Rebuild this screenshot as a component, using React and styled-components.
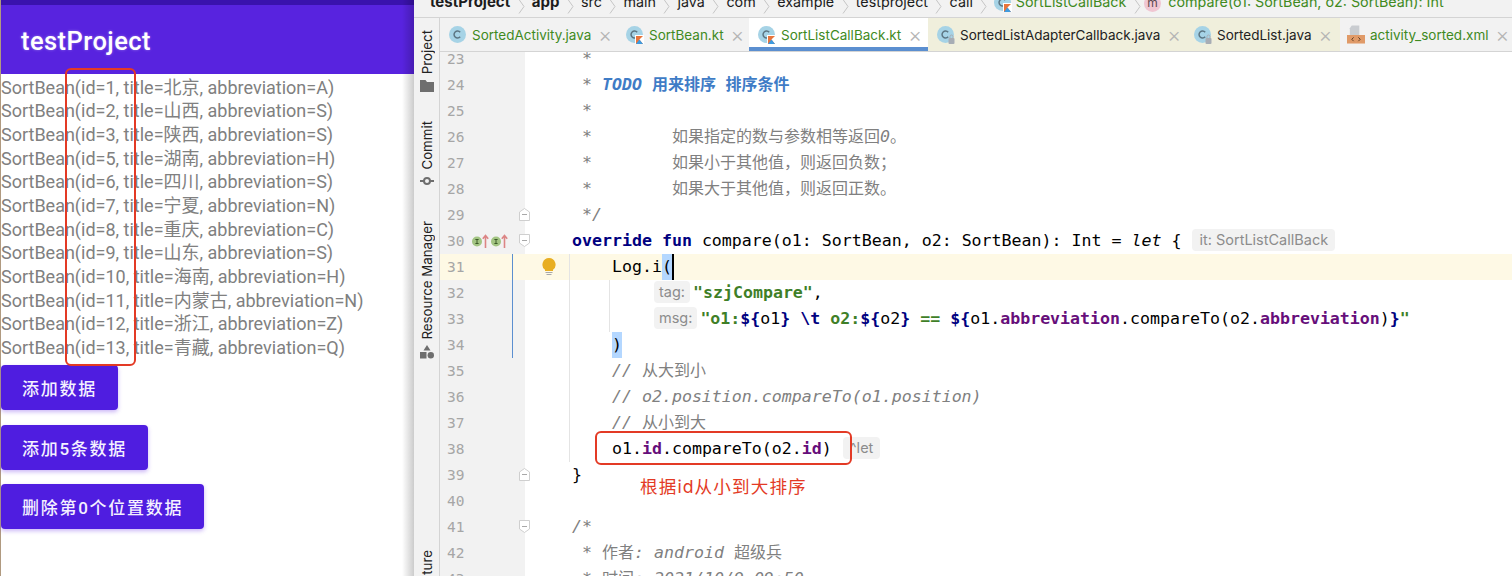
import React from "react";
import styled, { createGlobalStyle } from "styled-components";

const SANS = `"Inter", "Noto Sans CJK SC", sans-serif`;
const MONO = `"DejaVu Sans Mono", "Noto Sans CJK SC", monospace`;

const beans = [
  ["1", "北京", "A"],
  ["2", "山西", "S"],
  ["3", "陕西", "S"],
  ["5", "湖南", "H"],
  ["6", "四川", "S"],
  ["7", "宁夏", "N"],
  ["8", "重庆", "C"],
  ["9", "山东", "S"],
  ["10", "海南", "H"],
  ["11", "内蒙古", "N"],
  ["12", "浙江", "Z"],
  ["13", "青藏", "Q"],
];

const crumbs = ["src", "main", "java", "com", "example", "testproject", "call"];

const ClassIcon = ({ kotlin, lock }) => (
  <svg width="18" height="18" viewBox="0 0 18 18" style={{ flex: "none" }}>
    <circle cx="8.5" cy="8.5" r="8.5" fill="#a6d3e6" />
    <path d="M11.2 6.2A3.5 3.5 0 1 0 11.2 10.8" fill="none" stroke="#5d7683" strokeWidth="1.5" />
    {kotlin && <rect x="9" y="9" width="9" height="9" fill="#fff" />}
    {kotlin && <path d="M10 10h7l-3.6 3.6L17 18h-7z" fill="#e8743b" />}
    {kotlin && <path d="M13.4 13.6L17 18h-7z" fill="#3d9be0" />}
    {lock && <rect x="11.5" y="12" width="6" height="6" rx="1" fill="#a7adb5" />}
    {lock && <path d="M13 12v-1.5a1.5 1.5 0 0 1 3 0V12" fill="none" stroke="#a7adb5" />}
  </svg>
);

const XmlIcon = () => (
  <svg width="18" height="20" viewBox="0 0 19 20" style={{ flex: "none", marginLeft: -2 }}>
    <path d="M5 0h8v10H3V3z" fill="#c9ccd0" />
    <rect x="0" y="10" width="19" height="9" fill="#e09a68" />
    <path d="M7 12.5L5 14.5l2 2M12 12.5l2 2-2 2" fill="none" stroke="#5a3a22" strokeWidth="1" />
  </svg>
);

const FoldMark = ({ up }) => (
  <svg width="11" height="13" viewBox="0 0 11 13">
    <path
      d={up ? "M.5 12.5V4L5.5.5 10.5 4v8.5z" : "M.5.5h10V9L5.5 12.5.5 9z"}
      fill="#fff"
      stroke="#cfcfcf"
    />
    <path d="M3 6.5h5" stroke="#a8a8a8" />
  </svg>
);

const OverrideMark = () => (
  <svg width="18" height="16" viewBox="0 0 18 16">
    <circle cx="5" cy="8.5" r="5" fill="#a3c583" />
    <path d="M3.4 6.5h3.2M3.4 10.5h3.2M5 6.5v4" stroke="#3c5a28" strokeWidth="1" />
    <path d="M13.5 15V3M10.8 5.8l2.7-3.3 2.7 3.3" fill="none" stroke="#dc8585" strokeWidth="1.6" />
  </svg>
);

const Bulb = () => (
  <svg width="14" height="18" viewBox="0 0 14 18">
    <path d="M7 0a6.6 6.6 0 0 0-4 11.8V13h8v-1.2A6.6 6.6 0 0 0 7 0z" fill="#e8ae22" />
    <path d="M3.5 14.5h7M4.5 16.5h5" stroke="#a9a9a9" strokeWidth="1.2" />
  </svg>
);

const FolderIcon = () => (
  <svg width="14" height="12" viewBox="0 0 14 12">
    <path d="M0 0h5.5l1.5 2h7v10H0z" fill="#6e6e6e" />
  </svg>
);

const CommitIcon = () => (
  <svg width="14" height="10" viewBox="0 0 14 10">
    <circle cx="7" cy="5" r="3" fill="none" stroke="#6e6e6e" strokeWidth="2" />
    <path d="M0 5h4M10 5h4" stroke="#6e6e6e" strokeWidth="2" />
  </svg>
);

const ShapesIcon = () => (
  <svg width="14" height="14" viewBox="0 0 14 14">
    <path d="M7 0l3.5 5.5h-7z" fill="#6e6e6e" />
    <rect x="0" y="7" width="6.5" height="6.5" fill="#6e6e6e" />
    <circle cx="10.8" cy="10.3" r="3.2" fill="#6e6e6e" />
  </svg>
);

const Chevron = () => (
  <svg width="7" height="15" viewBox="0 0 7 15" style={{ flex: "none", marginBottom: -2 }}>
    <path d="M1 .5l5 7-5 7" fill="none" stroke="#c6c6c6" />
  </svg>
);

const App = () => {
  return (
    <Page>
      <GlobalStyle />
      <Phone>
        <StatusBar />
        <AppBar>testProject</AppBar>
        <BeanList>
          {beans.map(([id, title, abbr]) => (
            <BeanRow key={id}>
              SortBean(id={id}, title={title}, abbreviation={abbr})
            </BeanRow>
          ))}
        </BeanList>
        <Buttons>
          <ActionButton>添加数据</ActionButton>
          <ActionButton>添加5条数据</ActionButton>
          <ActionButton>删除第0个位置数据</ActionButton>
        </Buttons>
        <IdColumnMark />
        <EdgeShadow />
      </Phone>

      <Ide>
        <Breadcrumb>
          <Crumb $bold>testProject</Crumb>
          <Chevron />
          <Crumb $bold>app</Crumb>
          <Chevron />
          {crumbs.map((c) => (
            <React.Fragment key={c}>
              <Crumb>{c}</Crumb>
              <Chevron />
            </React.Fragment>
          ))}
          <ClassIcon kotlin />
          <Crumb $green $tight>SortListCallBack</Crumb>
          <Chevron />
          <MethodIcon>m</MethodIcon>
          <Crumb $green>compare(o1: SortBean, o2: SortBean): Int</Crumb>
        </Breadcrumb>

        <Workspace>
          <ToolStrip>
            <ToolItem $top={12}>
              <ToolLabel>Project</ToolLabel>
              <FolderIcon />
            </ToolItem>
            <ToolItem $top={29}>
              <ToolLabel>Commit</ToolLabel>
              <CommitIcon />
            </ToolItem>
            <ToolItem $top={35}>
              <ToolLabel>Resource Manager</ToolLabel>
              <ShapesIcon />
            </ToolItem>
            <ToolItem $top={191}>
              <ToolLabel>ture</ToolLabel>
            </ToolItem>
          </ToolStrip>

          <EditorColumn>
            <TabBar>
              <Tab $width={177}>
                <ClassIcon />
                <TabName>SortedActivity.java</TabName>
                <TabClose>×</TabClose>
              </Tab>
              <Tab $width={132}>
                <ClassIcon kotlin />
                <TabName>SortBean.kt</TabName>
                <TabClose>×</TabClose>
              </Tab>
              <Tab $width={179} $active>
                <ClassIcon kotlin />
                <TabName>SortListCallBack.kt</TabName>
                <TabClose>×</TabClose>
              </Tab>
              <Tab $width={257} $library>
                <ClassIcon lock />
                <TabName $dark>SortedListAdapterCallback.java</TabName>
                <TabClose>×</TabClose>
              </Tab>
              <Tab $width={155} $library>
                <ClassIcon lock />
                <TabName $dark>SortedList.java</TabName>
                <TabClose>×</TabClose>
              </Tab>
              <Tab $width={180}>
                <XmlIcon />
                <TabName>activity_sorted.xml</TabName>
                <TabClose>×</TabClose>
              </Tab>
            </TabBar>

            <Editor>
              <Scroller>
                <Line n={23}><Cmt> *</Cmt></Line>
                <Line n={24}>
                  <Cmt> * </Cmt>
                  <Todo>TODO </Todo>
                  <TodoCjk>用来排序 排序条件</TodoCjk>
                </Line>
                <Line n={25}><Cmt> *</Cmt></Line>
                <Line n={26}>
                  <Cmt> *        </Cmt>
                  <CmtCjk>如果指定的数与参数相等返回</CmtCjk>
                  <Cmt>0</Cmt>
                  <CmtCjk>。</CmtCjk>
                </Line>
                <Line n={27}>
                  <Cmt> *        </Cmt>
                  <CmtCjk>如果小于其他值，则返回负数；</CmtCjk>
                </Line>
                <Line n={28}>
                  <Cmt> *        </Cmt>
                  <CmtCjk>如果大于其他值，则返回正数。</CmtCjk>
                </Line>
                <Line n={29} fold="up"><Cmt> */</Cmt></Line>
                <Line n={30} fold="down" marks>
                  <Kw>override fun</Kw> compare(o1: SortBean, o2: SortBean): Int = <em>let</em> {"{"}
                  <Inlay $after>it: SortListCallBack</Inlay>
                </Line>
                <Line n={31} current changed guide bulb>
                  {"    Log.i"}
                  <Paren>(</Paren>
                  <Caret />
                </Line>
                <Line n={32} changed guide inner>
                  {"        "}
                  <Inlay>tag:</Inlay>
                  <Str>"szjCompare"</Str>,
                </Line>
                <Line n={33} changed guide inner>
                  {"        "}
                  <Inlay>msg:</Inlay>
                  <Str>"o1:</Str><Kw>{"${"}</Kw>o1<Kw>{"}"} \t</Kw><Str> o2:</Str><Kw>{"${"}</Kw>o2<Kw>{"}"}</Kw>
                  <Str> == </Str><Kw>{"${"}</Kw>o1.<Prop>abbreviation</Prop>.compareTo(o2.<Prop>abbreviation</Prop>)<Kw>{"}"}</Kw><Str>"</Str>
                </Line>
                <Line n={34} changed guide>
                  {"    "}
                  <Paren>)</Paren>
                </Line>
                <Line n={35} guide>
                  <Cmt>{"    // "}</Cmt>
                  <CmtCjk>从大到小</CmtCjk>
                </Line>
                <Line n={36} guide>
                  <Cmt>{"    // o2.position.compareTo(o1.position)"}</Cmt>
                </Line>
                <Line n={37} guide>
                  <Cmt>{"    // "}</Cmt>
                  <CmtCjk>从小到大</CmtCjk>
                </Line>
                <Line n={38} guide>
                  {"    o1."}<Prop>id</Prop>.compareTo(o2.<Prop>id</Prop>)
                  <Inlay $after>^let</Inlay>
                </Line>
                <Line n={39} fold="up">{"}"}</Line>
                <Line n={40} />
                <Line n={41} fold="down"><Cmt>/*</Cmt></Line>
                <Line n={42}>
                  <Cmt> * </Cmt>
                  <CmtCjk>作者</CmtCjk>
                  <Cmt>: android </Cmt>
                  <CmtCjk>超级兵</CmtCjk>
                </Line>
                <Line n={43}>
                  <Cmt> * </Cmt>
                  <CmtCjk>时间</CmtCjk>
                  <Cmt>: 2021/10/9 09:50</Cmt>
                </Line>
              </Scroller>
              <CodeMark />
              <CodeNote>根据id从小到大排序</CodeNote>
            </Editor>
          </EditorColumn>
        </Workspace>
      </Ide>
    </Page>
  );
};

const Line = ({ n, current, changed, guide, inner, fold, marks, bulb, children }) => (
  <Row $current={current}>
    <Gutter $current={current}>
      <LineNo>{n}</LineNo>
      {marks && (
        <Marks>
          <OverrideMark />
          <OverrideMark />
        </Marks>
      )}
      {changed && <ChangeBar />}
      {fold && (
        <FoldSlot>
          <FoldMark up={fold === "up"} />
        </FoldSlot>
      )}
    </Gutter>
    <BulbColumn>{bulb && <Bulb />}</BulbColumn>
    <Code>
      {guide && <Guide $left={-3} />}
      {inner && <Guide $left={37} />}
      {children}
    </Code>
  </Row>
);

const GlobalStyle = createGlobalStyle`
  html, body {
    margin: 0;
    padding: 0;
    overflow: hidden;
    background: #fff;
  }
  * {
    box-sizing: border-box;
  }
`;

const Page = styled.div`
  display: flex;
  width: 1512px;
  height: 576px;
  overflow: hidden;
`;

const Phone = styled.section`
  position: relative;
  flex: none;
  display: flex;
  flex-direction: column;
  width: 414px;
  height: 576px;
  border-left: 1px solid #b09a80;
  background: #fff;
  font-family: "Roboto", "Noto Sans CJK SC", sans-serif;
`;

const StatusBar = styled.div`
  flex: none;
  height: 5px;
  background: #3a12ad;
`;

const AppBar = styled.header`
  flex: none;
  display: flex;
  align-items: center;
  height: 69px;
  padding: 3px 0 0 20px;
  background: #5823df;
  color: #fff;
  font-size: 25.5px;
  font-weight: 500;
  letter-spacing: 0.45px;
  text-shadow: 0 0 3px rgba(255, 255, 255, 0.35);
`;

const BeanList = styled.div`
  display: flex;
  flex-direction: column;
  margin-top: 1.6px;
`;

const BeanRow = styled.div`
  height: 23.68px;
  line-height: 23.68px;
  color: #808080;
  font-size: 18px;
  white-space: nowrap;
`;

const Buttons = styled.div`
  display: flex;
  flex-direction: column;
  align-items: flex-start;
  gap: 14.5px;
  margin-top: 5.4px;
`;

const ActionButton = styled.button`
  height: 45px;
  padding: 0 21px;
  border: none;
  border-radius: 4px;
  background: #4f1de0;
  box-shadow: 0 2px 4px rgba(110, 50, 230, 0.35);
  color: #f4f0ff;
  font-family: inherit;
  font-size: 17px;
  font-weight: 500;
  letter-spacing: 1.72px;
`;

const IdColumnMark = styled.div`
  position: absolute;
  left: 64px;
  top: 68px;
  width: 71px;
  height: 298px;
  border: 2.5px solid #e33a25;
  border-radius: 6px;
`;

const EdgeShadow = styled.div`
  position: absolute;
  top: 0;
  right: 0;
  bottom: 0;
  width: 12px;
  background: linear-gradient(to right, rgba(0, 0, 0, 0), rgba(0, 0, 0, 0.2));
`;

const Ide = styled.section`
  flex: 1;
  min-width: 0;
  display: flex;
  flex-direction: column;
  font-family: ${SANS};
`;

const Breadcrumb = styled.nav`
  flex: none;
  display: flex;
  align-items: flex-end;
  gap: 7.3px;
  height: 18px;
  padding: 0 0 5px 16px;
  overflow: hidden;
  background: #f2f2f2;
  border-bottom: 1px solid #d4d4d4;
  white-space: nowrap;
`;

const Crumb = styled.span`
  margin-left: ${(p) => (p.$tight ? "-4px" : "0")};
  line-height: 20px;
  font-size: ${(p) => (p.$bold ? "15px" : "14.3px")};
  font-weight: ${(p) => (p.$bold ? 700 : 400)};
  color: ${(p) => (p.$green ? "#3f8a1e" : "#1c1c1c")};
`;

const MethodIcon = styled.span`
  flex: none;
  width: 17px;
  height: 17px;
  margin-left: -4px;
  border-radius: 50%;
  background: #f0c6d2;
  color: #5a4a50;
  font-size: 12px;
  line-height: 16px;
  text-align: center;
`;

const Workspace = styled.div`
  flex: 1;
  min-height: 0;
  display: flex;
`;

const ToolStrip = styled.aside`
  flex: none;
  display: flex;
  flex-direction: column;
  width: 26px;
  overflow: hidden;
  background: #f2f2f2;
  border-right: 1px solid #d4d4d4;
`;

const ToolItem = styled.div`
  flex: none;
  display: flex;
  flex-direction: column;
  align-items: center;
  gap: 6px;
  margin-top: ${(p) => p.$top}px;
`;

const ToolLabel = styled.span`
  writing-mode: vertical-rl;
  transform: rotate(180deg);
  color: #222;
  font-size: 13.3px;
  line-height: 16px;
`;

const EditorColumn = styled.div`
  flex: 1;
  min-width: 0;
  display: flex;
  flex-direction: column;
`;

const TabBar = styled.div`
  flex: none;
  display: flex;
  height: 34px;
  overflow: hidden;
  background: #f2f2f2;
  border-bottom: 1px solid #d4d4d4;
`;

const Tab = styled.div`
  flex: none;
  display: flex;
  align-items: center;
  width: ${(p) => p.$width}px;
  padding-left: 9px;
  background: ${(p) => (p.$active ? "#fff" : p.$library ? "#f0efdc" : "#f2f2f2")};
  box-shadow: ${(p) => (p.$active ? "inset 0 -4px 0 #5b8fd0" : "none")};
`;

const TabName = styled.span`
  margin-left: 5px;
  color: ${(p) => (p.$dark ? "#222" : "#3f8a1e")};
  font-size: 13.5px;
  white-space: nowrap;
`;

const TabClose = styled.span`
  margin-left: 7px;
  color: #b5b5b5;
  font-size: 21px;
  font-weight: 300;
  line-height: 21px;
`;

const Editor = styled.div`
  position: relative;
  flex: 1;
  min-height: 0;
  overflow: hidden;
  background: #fff;
`;

const Scroller = styled.div`
  display: flex;
  flex-direction: column;
  margin-top: -6px;
`;

const Row = styled.div`
  flex: none;
  display: flex;
  height: 26px;
  background: ${(p) => (p.$current ? "#fef9e5" : "transparent")};
`;

const Gutter = styled.div`
  position: relative;
  flex: none;
  display: flex;
  align-items: center;
  width: 85px;
  padding-left: 7px;
  background: ${(p) => (p.$current ? "#fef9e5" : "#f2f2f2")};
`;

const LineNo = styled.span`
  width: 20px;
  color: #a6a6a6;
  font-family: ${MONO};
  font-size: 14.5px;
`;

const Marks = styled.span`
  display: flex;
  gap: 1px;
  margin-left: 5px;
`;

const ChangeBar = styled.span`
  position: absolute;
  left: 72px;
  top: 0;
  bottom: 0;
  width: 1px;
  background: #5b8fd0;
`;

const FoldSlot = styled.span`
  position: absolute;
  left: 79px;
  top: 6px;
  display: flex;
`;

const BulbColumn = styled.div`
  flex: none;
  display: flex;
  justify-content: center;
  align-items: center;
  width: 47px;
`;

const Code = styled.div`
  position: relative;
  flex: 1;
  min-width: 0;
  line-height: 26px;
  color: #000;
  font-family: ${MONO};
  font-size: 16.6px;
  white-space: pre;
  em {
    font-style: italic;
  }
`;

const Guide = styled.span`
  position: absolute;
  top: 0;
  bottom: 0;
  left: ${(p) => p.$left}px;
  width: 1px;
  background: #e4e4e4;
`;

const Kw = styled.span`
  color: #000080;
  font-weight: 700;
`;

const Str = styled.span`
  color: #3f7f28;
  font-weight: 700;
`;

const Prop = styled.span`
  color: #660e7a;
  font-weight: 700;
`;

const Cmt = styled.span`
  color: #808080;
  font-style: italic;
`;

const CmtCjk = styled.span`
  color: #808080;
  font-size: 16px;
`;

const Todo = styled.span`
  color: #3f7cc6;
  font-style: italic;
  font-weight: 700;
`;

const TodoCjk = styled.span`
  color: #3f7cc6;
  font-size: 16px;
  font-weight: 700;
`;

const Paren = styled.span`
  display: inline-block;
  height: 26px;
  background: #b4d7ff;
`;

const Caret = styled.span`
  display: inline-block;
  width: 2px;
  height: 26px;
  vertical-align: top;
  background: #000;
`;

const Inlay = styled.span`
  display: inline-block;
  height: 22px;
  margin-left: ${(p) => (p.$after ? "11px" : "2px")};
  margin-right: 3px;
  padding: 0 ${(p) => (p.$after ? "7px" : "5px")};
  border-radius: 4px;
  background: #f2f2f2;
  color: #8c8c8c;
  font-family: ${SANS};
  font-size: 14.5px;
  font-style: normal;
  font-weight: 400;
  line-height: 22px;
  vertical-align: 1px;
`;

const CodeMark = styled.div`
  position: absolute;
  left: 155px;
  top: 379px;
  width: 257px;
  height: 34px;
  border: 2.5px solid #e33a25;
  border-radius: 6px;
`;

const CodeNote = styled.div`
  position: absolute;
  left: 200px;
  top: 423px;
  color: #e33a25;
  font-size: 17.6px;
  letter-spacing: 1.1px;
  line-height: 24px;
  white-space: nowrap;
`;

export default App;
